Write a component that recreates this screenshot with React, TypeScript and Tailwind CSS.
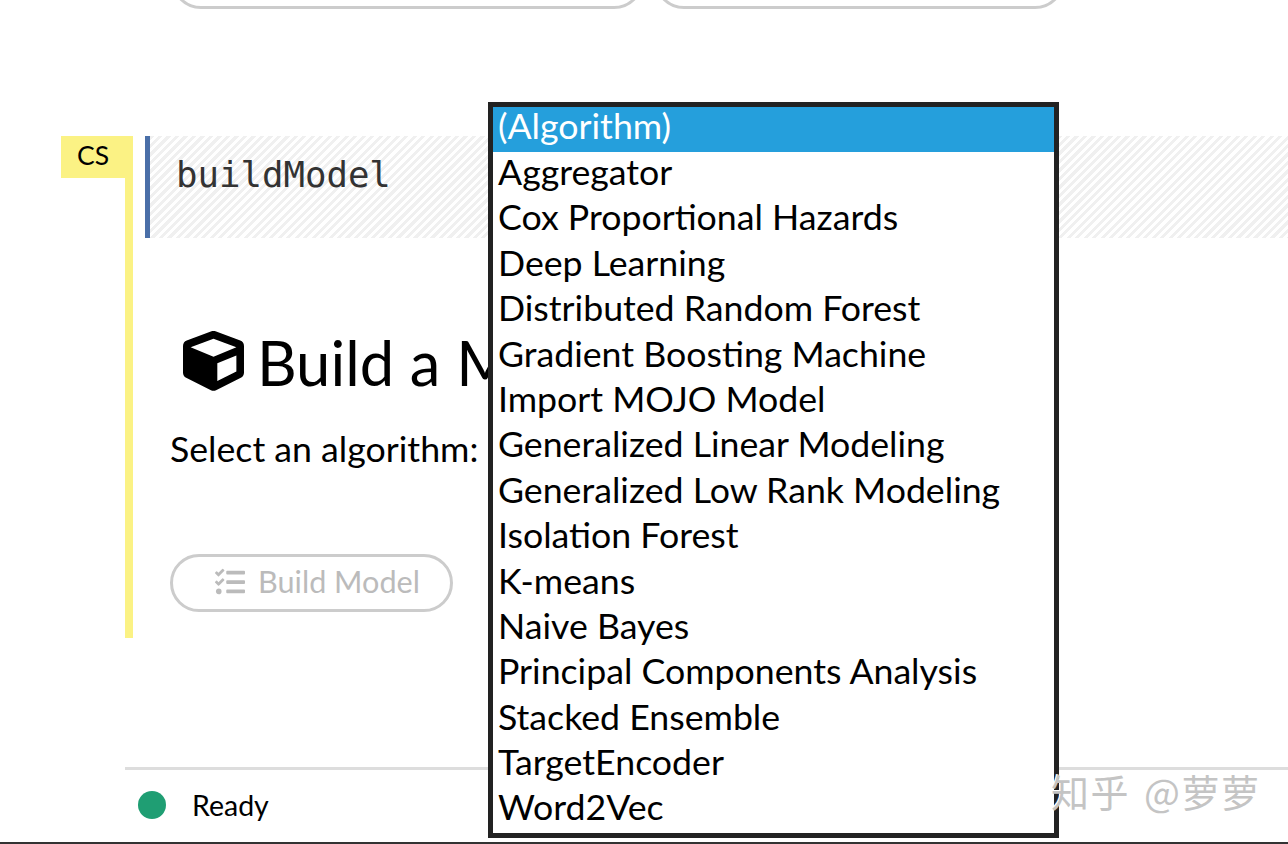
import { FaCube, FaTasks } from "react-icons/fa";

const algorithms = [
  "Aggregator",
  "Cox Proportional Hazards",
  "Deep Learning",
  "Distributed Random Forest",
  "Gradient Boosting Machine",
  "Import MOJO Model",
  "Generalized Linear Modeling",
  "Generalized Low Rank Modeling",
  "Isolation Forest",
  "K-means",
  "Naive Bayes",
  "Principal Components Analysis",
  "Stacked Ensemble",
  "TargetEncoder",
  "Word2Vec",
];

export default function App() {
  return (
    <div className="relative h-[844px] w-full overflow-hidden bg-white font-['Lato',sans-serif] text-black">
      {/* toolbar buttons, cut off by the top of the page */}
      <div className="ml-[171px] flex h-[136px] gap-[10px]">
        <div className="-mt-[60px] h-[69px] w-[473px] rounded-[30px] border-[3px] border-[#cccccc]" />
        <div className="-mt-[60px] h-[69px] w-[411px] rounded-[30px] border-[3px] border-[#cccccc]" />
      </div>

      {/* cell */}
      <div className="flex h-[502px]">
        <div className="flex w-[133px] shrink-0 flex-col items-end">
          <div className="flex h-[42px] w-[72px] items-center pb-[4px] pl-[16px] text-[26.5px] leading-none bg-[#fbf284]">CS</div>
          <div className="w-[8px] flex-1 bg-[#fbf284]" />
        </div>
        <div className="ml-[12px] min-w-0 flex-1">
          <div className="flex h-[102px] items-start border-l-[5px] border-[#4a6fa8] bg-[repeating-linear-gradient(135deg,#f0f0f0_0px,#f0f0f0_3px,#ffffff_3px,#ffffff_6px)] pl-[26px] pt-[18px] font-['DejaVu_Sans_Mono',monospace] text-[35.7px] leading-[42px] text-[#333333]">
            buildModel
          </div>
          <div className="ml-[26px] mt-[84px] flex items-center gap-[13px] pl-[12px] text-[61.5px] leading-[80px]">
            <FaCube className="-mt-[3px] h-[62px] w-[61px]" />
            <span>Build a Model</span>
          </div>
          <div className="ml-[25px] mt-[25px] text-[35.7px] leading-[44px]">Select an algorithm:</div>
          <div className="ml-[25px] mt-[83px] flex h-[58px] w-[283px] items-center justify-center gap-[13px] rounded-full border-[3px] border-[#cccccc] pb-[2px] pl-[12px] text-[30.6px] text-[#bbbbbb]">
            <FaTasks className="h-[30px] w-[30px]" />
            <span>Build Model</span>
          </div>
        </div>
      </div>

      {/* status bar */}
      <div className="ml-[125px] mt-[129px] flex h-[75px] items-center border-t-[3px] border-[#dddddd] pb-[3px] pl-[13px]">
        <div className="h-[28px] w-[28px] rounded-full bg-[#1f9e73]" />
        <div className="ml-[26px] mt-[1px] text-[28.5px]">Ready</div>
      </div>
      <div className="h-[2px] bg-[#333333]" />

      {/* open algorithm dropdown */}
      <div className="absolute left-[488px] top-[102px] h-[736px] w-[571px] border-[5px] border-[#222222] bg-white text-[35.7px] leading-[39.4px]">
        <div className="h-[45px] bg-[#259fdc] pl-[5px] leading-[37.4px] text-white">(Algorithm)</div>
        {algorithms.map((name) => (
          <div key={name} className="h-[45.4px] whitespace-nowrap pl-[5px]">
            {name}
          </div>
        ))}
      </div>

      {/* watermark */}
      <div className="absolute left-[1051px] top-[762px] font-['Noto_Sans_CJK_SC',sans-serif] text-[38px] tracking-[1.5px] text-[#c4c4c4] [text-shadow:-1px_-1px_0_#ffffff] [word-spacing:4px]">
        知乎 @萝萝
      </div>
    </div>
  );
}
